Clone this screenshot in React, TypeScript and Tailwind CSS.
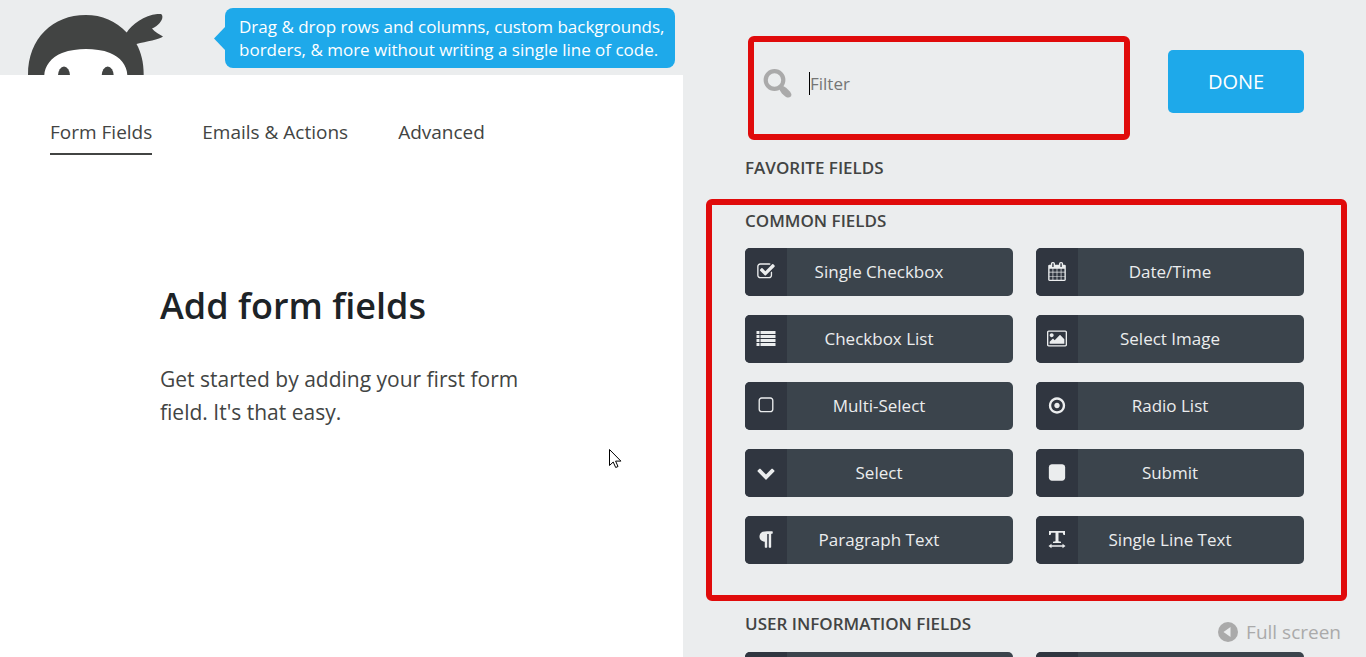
import { useState } from 'react';

type Field = {
  name: string;
  label?: string;
  icon?: string;
  viewBox?: string;
};

const checkSquare =
  'M1472 930v318q0 119-84.5 203.5t-203.5 84.5h-832q-119 0-203.5-84.5t-84.5-203.5v-832q0-119 84.5-203.5t203.5-84.5h832q63 0 117 25 15 7 18 23 3 17-9 29l-49 49q-10 10-23 10-3 0-9-2-23-6-45-6h-832q-66 0-113 47t-47 113v832q0 66 47 113t113 47h832q66 0 113-47t47-113v-254q0-13 9-22l64-64q10-10 23-10 6 0 12 3 20 8 20 29zm231-489l-814 814q-24 24-57 24t-57-24l-430-430q-24-24-24-57t24-57l110-110q24-24 57-24t57 24l263 263 647-647q24-24 57-24t57 24l110 110q24 24 24 57t-24 57z';
const calendar =
  'M192 1664h288v-288h-288v288zm352 0h320v-288h-320v288zm-352-352h288v-320h-288v320zm352 0h320v-320h-320v320zm-352-384h288v-288h-288v288zm736 736h320v-288h-320v288zm-384-736h320v-288h-320v288zm768 736h288v-288h-288v288zm-384-352h320v-320h-320v320zm-352-864v-288q0-13-9.5-22.5t-22.5-9.5h-64q-13 0-22.5 9.5t-9.5 22.5v288q0 13 9.5 22.5t22.5 9.5h64q13 0 22.5-9.5t9.5-22.5zm736 864h288v-320h-288v320zm-384-384h320v-288h-320v288zm384 0h288v-288h-288v288zm32-480v-288q0-13-9.5-22.5t-22.5-9.5h-64q-13 0-22.5 9.5t-9.5 22.5v288q0 13 9.5 22.5t22.5 9.5h64q13 0 22.5-9.5t9.5-22.5zm384-64v1280q0 52-38 90t-90 38h-1408q-52 0-90-38t-38-90v-1280q0-52 38-90t90-38h128v-96q0-66 47-113t113-47h64q66 0 113 47t47 113v96h384v-96q0-66 47-113t113-47h64q66 0 113 47t47 113v96h128q52 0 90 38t38 90z';
const picture =
  'M576 576q0 80-56 136t-136 56-136-56-56-136 56-136 136-56 136 56 56 136zm1024 384v448h-1408v-192l320-320 160 160 512-512zm96-704h-1600q-13 0-22.5 9.5t-9.5 22.5v1216q0 13 9.5 22.5t22.5 9.5h1600q13 0 22.5-9.5t9.5-22.5v-1216q0-13-9.5-22.5t-22.5-9.5zm160 32v1216q0 66-47 113t-113 47h-1600q-66 0-113-47t-47-113v-1216q0-66 47-113t113-47h1600q66 0 113 47t47 113z';
const squareOutline =
  'M1312 256h-832q-66 0-113 47t-47 113v832q0 66 47 113t113 47h832q66 0 113-47t47-113v-832q0-66-47-113t-113-47zm288 160v832q0 119-84.5 203.5t-203.5 84.5h-832q-119 0-203.5-84.5t-84.5-203.5v-832q0-119 84.5-203.5t203.5-84.5h832q119 0 203.5 84.5t84.5 203.5z';
const dotCircle =
  'M1152 896q0 106-75 181t-181 75-181-75-75-181 75-181 181-75 181 75 75 181zm-256-544q-148 0-273 73t-198 198-73 273 73 273 198 198 273 73 273-73 198-198 73-273-73-273-198-198-273-73zm768 544q0 209-103 385.5t-279.5 279.5-385.5 103-385.5-103-279.5-279.5-103-385.5 103-385.5 279.5-279.5 385.5-103 385.5 103 279.5 279.5 103 385.5z';
const chevron =
  'M1683 808l-742 741q-19 19-45 19t-45-19l-742-741q-19-19-19-45.5t19-45.5l166-165q19-19 45-19t45 19l531 531 531-531q19-19 45-19t45 19l166 165q19 19 19 45.5t-19 45.5z';
const square =
  'M1664 416v960q0 119-84.5 203.5t-203.5 84.5h-960q-119 0-203.5-84.5t-84.5-203.5v-960q0-119 84.5-203.5t203.5-84.5h960q119 0 203.5 84.5t84.5 203.5z';
const paragraph =
  'M1534 189v73q0 29-18.5 61t-42.5 32q-50 0-54 1-26 6-32 31-3 11-3 64v1152q0 25-18 43t-43 18h-108q-25 0-43-18t-18-43v-1218h-143v1218q0 25-17.5 43t-43.5 18h-108q-26 0-43.5-18t-17.5-43v-496q-147-12-245-59-126-58-192-179-64-117-64-259 0-166 88-286 88-118 209-159 111-37 417-37h479q25 0 43 18t18 43z';
const list =
  'M0 2h3v3H0zM4 2h15v3H4zM0 6h3v3H0zM4 6h15v3H4zM0 10h3v3H0zM4 10h15v3H4zM0 14h3v3H0zM4 14h15v3H4z';
const textWidth =
  'M1.500 1H17.500V5H16L15.200 2.800H11V11.300L13.500 11.800V13H5.500V11.800L8 11.300V2.800H3.800L3 5H1.500zM1 16L4 13.700V15.200H15V13.700L18 16L15 18.300V16.800H4V18.300z';

const commonFields: Field[] = [
  { name: 'checkbox', label: 'Single Checkbox', icon: checkSquare },
  { name: 'date', label: 'Date/Time', icon: calendar },
  { name: 'listcheckbox', label: 'Checkbox List', icon: list, viewBox: '0 0 19 19' },
  { name: 'listimage', label: 'Select Image', icon: picture, viewBox: '-64 0 1920 1792' },
  { name: 'listmultiselect', label: 'Multi-Select', icon: squareOutline },
  { name: 'listradio', label: 'Radio List', icon: dotCircle },
  { name: 'listselect', label: 'Select', icon: chevron },
  { name: 'submit', label: 'Submit', icon: square },
  { name: 'textarea', label: 'Paragraph Text', icon: paragraph },
  { name: 'textbox', label: 'Single Line Text', icon: textWidth, viewBox: '0 0 19 19' },
];

const userFields: Field[] = [{ name: 'firstname' }, { name: 'lastname' }];

const tabs = ['Form Fields', 'Emails & Actions', 'Advanced'];

function FieldGrid({ fields }: { fields: Field[] }) {
  return (
    <div className="grid grid-cols-2 gap-x-[23px] gap-y-[19px]">
      {fields.map((field) => (
        <button
          key={field.name}
          type="button"
          aria-label={field.label ?? field.name}
          className="flex h-12 overflow-hidden rounded-[5px] bg-[#3b444c] text-[17px] text-[#ebedee]"
        >
          <span className="flex h-full w-[42px] items-center justify-center bg-[#303640] pb-0.5">
            {field.icon && (
              <svg className="h-[19px] w-5" viewBox={field.viewBox ?? '0 0 1792 1792'} fill="currentColor" aria-hidden="true">
                <path d={field.icon} />
              </svg>
            )}
          </span>
          <span className="flex h-full flex-1 items-center justify-center pr-[42px]">{field.label}</span>
        </button>
      ))}
    </div>
  );
}

function NinjaLogo() {
  return (
    <svg className="w-[135px] h-[61px] shrink-0" viewBox="0 0 135 61" aria-label="Ninja Forms" role="img">
      <path
        fill="#424443"
        d="M0 61C0 24 25 1 57.700 1C74 1 88 7 98.700 18.500C104 10 119 -1 133 0C137 3 132 11 124 14.500C127 18 131 20 135 22.500C132 25.500 118 27.500 108.500 30C113 38 115.700 48 115.700 61Z"
      />
      <path fill="#fff" d="M16.300 61C16.500 53 23 43 34 39C42 36 50 35 58 35C66 35 75 36 82 39C92 43 99 51 99.300 61Z" />
      <ellipse cx="36" cy="62" rx="6" ry="9.500" fill="#424443" />
      <ellipse cx="79.700" cy="62" rx="6" ry="9.500" fill="#424443" />
    </svg>
  );
}

export default function App() {
  const [activeTab, setActiveTab] = useState(tabs[0]);
  const [filter, setFilter] = useState('');

  return (
    <div className="relative flex h-screen overflow-hidden bg-[#ebedee] font-['Open_Sans',sans-serif] text-[#424443]">
      {/* Builder */}
      <main className="flex w-1/2 flex-col">
        <header className="flex h-[75px] shrink-0 items-end pl-7">
          <NinjaLogo />
          <div className="mb-[7px] ml-[51px] flex items-center">
            <svg className="w-[11px] h-[23px]" viewBox="0 0 11 23" fill="#1ea9ea" aria-hidden="true">
              <path d="M11 0v23L0 11.500z" />
            </svg>
            <p className="rounded-lg bg-[#1ea9ea] py-[7px] pl-[14px] pr-[11px] text-[17px] leading-[23px] whitespace-nowrap text-white">
              Drag &amp; drop rows and columns, custom backgrounds,
              <br />
              borders, &amp; more without writing a single line of code.
            </p>
          </div>
        </header>

        <div className="flex-1 bg-white">
          <nav className="flex gap-[50px] pt-11 pl-[50px]">
            {tabs.map((tab) => (
              <button
                key={tab}
                type="button"
                onClick={() => setActiveTab(tab)}
                className={
                  tab === activeTab
                    ? 'h-9 border-b-2 border-[#424443] pb-2 text-[19px] leading-[26px]'
                    : 'h-9 border-b-2 border-transparent pb-2 text-[19px] leading-[26px]'
                }
              >
                {tab}
              </button>
            ))}
          </nav>

          <section className="px-40 pt-[125px]">
            <h1 className="text-4xl leading-[52px] font-semibold whitespace-nowrap text-[#1d2327]">Add form fields</h1>
            <p className="pt-[31px] text-[21px] leading-[33px] whitespace-nowrap">
              Get started by adding your first form
              <br />
              field. It's that easy.
            </p>
          </section>
        </div>
      </main>

      {/* Field drawer */}
      <aside className="w-1/2">
        <div className="flex items-start gap-[38px] pt-9 pr-[62px] pl-[65px]">
          <label className="flex h-[104px] min-w-0 flex-1 items-center rounded-md border-6 border-[#e00b0b] pb-[10px] pl-[9px]">
            <svg className="w-[29px] h-[30px] shrink-0" viewBox="0 0 29 30" fill="none" aria-hidden="true">
              <circle cx="11.500" cy="12" r="8.800" stroke="#aaaaaa" strokeWidth="4.200" />
              <path d="M16 20L19 17.500C23 19 27 23 28.300 26C29 29 26 30.500 23 29C20 27 17 24 16 20Z" fill="#aaaaaa" />
            </svg>
            <input
              type="text"
              aria-label="Filter"
              placeholder="Filter"
              value={filter}
              onChange={(e) => setFilter(e.target.value)}
              className="ml-[17px] h-[23px] min-w-0 flex-1 border-l border-black bg-transparent text-[17px] leading-[23px] outline-none placeholder:text-[#757575]"
            />
          </label>
          <button type="button" className="mt-[14px] h-[63px] w-[136px] rounded-[5px] bg-[#1ea9ea] text-xl text-white">
            DONE
          </button>
        </div>

        <h2 className="pt-4 pl-[62px] text-[17px] leading-6 font-semibold">FAVORITE FIELDS</h2>

        <section className="mt-[19px] mr-[19px] ml-[23px] rounded-md border-6 border-[#e00b0b] pt-1 pr-[37px] pb-[31px] pl-[33px]">
          <h2 className="pb-[15px] text-[17px] leading-6 font-semibold">COMMON FIELDS</h2>
          <FieldGrid fields={commonFields} />
        </section>

        <section className="px-[62px] pt-[11px]">
          <h2 className="pb-4 text-[17px] leading-6 font-semibold">USER INFORMATION FIELDS</h2>
          <FieldGrid fields={userFields} />
        </section>
      </aside>

      <button type="button" className="absolute right-[25px] bottom-3 flex items-center gap-2 text-[19px] leading-[26px] text-[#aaaaaa]">
        <svg className="w-5 h-5" viewBox="0 0 20 20" aria-hidden="true">
          <circle cx="10" cy="10" r="10" fill="#aaaaaa" />
          <path d="M12.500 5v10L5.500 10z" fill="#ebedee" />
        </svg>
        Full screen
      </button>

      {/* Mouse pointer */}
      <svg className="pointer-events-none absolute top-[449px] left-[609px] w-[13px] h-5" viewBox="0 0 13 20" aria-hidden="true">
        <path d="M.5.500v16l3.700-3.500 2.500 5.500 2.300-1-2.400-5.400h5.300z" fill="#fff" stroke="#000" strokeWidth="1" />
      </svg>
    </div>
  );
}
